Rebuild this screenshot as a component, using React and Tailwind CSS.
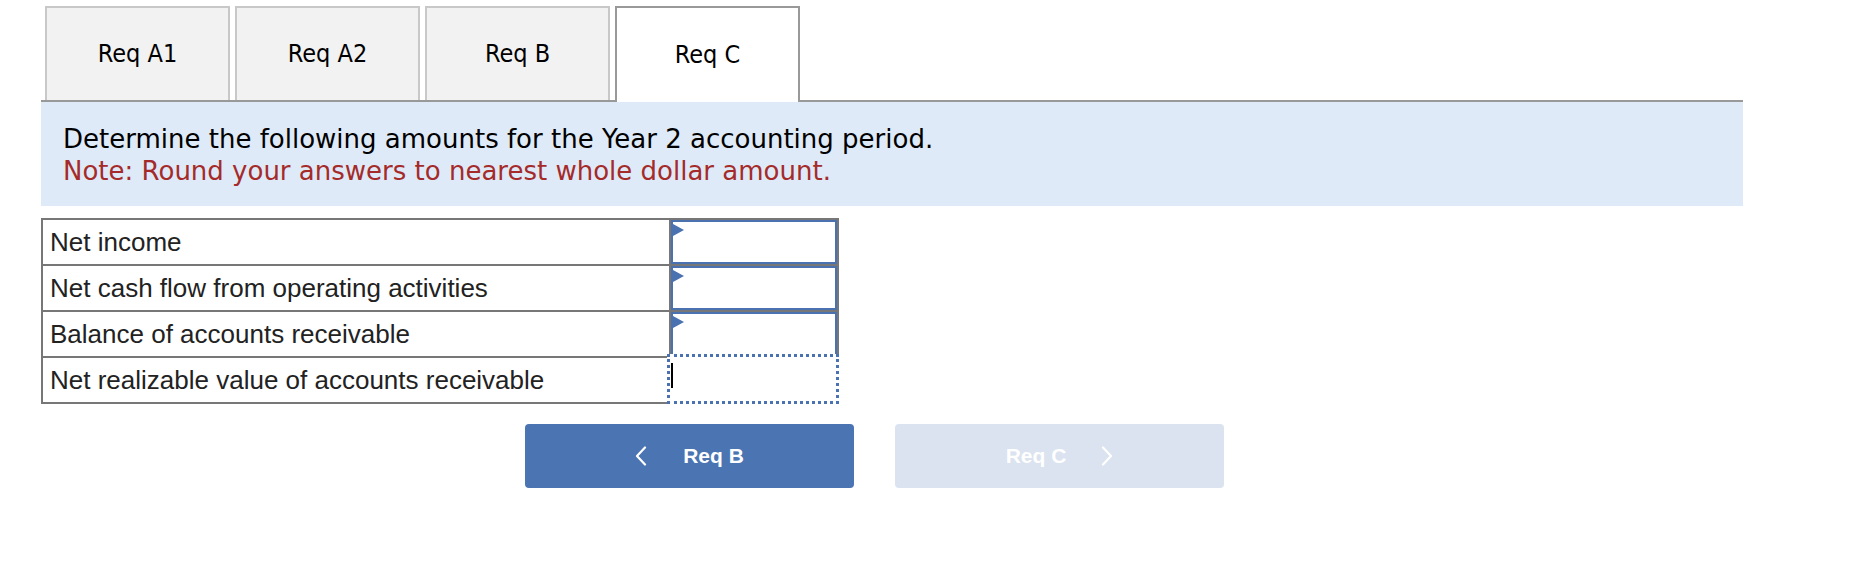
const tabs = ['Req A1', 'Req A2', 'Req B', 'Req C'];
const rows = [
  'Net income',
  'Net cash flow from operating activities',
  'Balance of accounts receivable',
  'Net realizable value of accounts receivable',
];

const tahoma = { fontFamily: '"DejaVu Sans Condensed", "DejaVu Sans", sans-serif' };
const verdana = { fontFamily: '"DejaVu Sans", Verdana, sans-serif' };
const arial = { fontFamily: '"Liberation Sans", Arial, sans-serif' };

function Marker() {
  return (
    <svg className="absolute left-0 top-[2px]" width="11" height="12" viewBox="0 0 11 12">
      <polygon points="0,0 11,6 0,12" fill="#4a72b0" />
    </svg>
  );
}

function Chevron({ dir }) {
  return (
    <svg width="12" height="20" viewBox="0 0 12 20" fill="none" stroke="currentColor" strokeWidth="2.2" strokeLinecap="round" strokeLinejoin="round">
      {dir === 'left' ? <polyline points="10,1.5 2,10 10,18.5" /> : <polyline points="2,1.5 10,10 2,18.5" />}
    </svg>
  );
}

function App() {
  return (
    <div className="min-h-[562px] w-[1854px] bg-white pl-[41px] pt-[6px]">
      <div className="w-[1702px]">
        {/* Tabs */}
        <div className="flex gap-[5px] border-b-2 border-[#999] pl-[4px]" style={tahoma}>
          {tabs.map((t, i) => {
            const active = i === tabs.length - 1;
            return (
              <div
                key={t}
                className={
                  active
                    ? 'relative -mb-[2px] flex h-[96px] w-[185px] items-center justify-center border-2 border-b-0 border-[#999] bg-white pb-[1px] text-[25px] text-black'
                    : 'flex h-[94px] w-[185px] items-center justify-center border-2 border-b-0 border-[#c8c8c8] bg-[#f2f2f2] text-[25px] text-black'
                }
              >
                {t}
              </div>
            );
          })}
        </div>

        {/* Instructions */}
        <div className="bg-[#deeaf7] pb-[19px] pl-[22px] pt-[22px] text-[26px] leading-[31.5px]" style={verdana}>
          <p className="text-black">Determine the following amounts for the Year 2 accounting period.</p>
          <p className="text-[#a52a2a]">Note: Round your answers to nearest whole dollar amount.</p>
        </div>

        {/* Answer table */}
        <div
          className="mt-[12px] grid w-[798px] grid-cols-[628px_168px] border-l-2 border-t-2 border-[#777] text-[26px] text-[#222]"
          style={arial}
        >
          {rows.map((r, i) => (
            <div key={r} className="contents">
              <div className="flex h-[46px] items-center border-b-2 border-r-2 border-[#777] pl-[7px]">{r}</div>
              <div className="relative h-[46px] border-b-2 border-r-2 border-[#777]">
                {i < 3 ? (
                  <div className="relative h-full w-full border-2 border-[#4a72b0] bg-white">
                    <Marker />
                  </div>
                ) : (
                  <>
                    <div className="absolute -bottom-[2px] -left-[4px] -right-[2px] -top-[4px] border-[3px] border-dotted border-[#4a72b0] bg-white" />
                    <span className="absolute left-0 top-[5px] h-[25px] w-[2px] bg-black" />
                  </>
                )}
              </div>
            </div>
          ))}
        </div>

        {/* Navigation */}
        <div className="ml-[484px] mt-[20px] flex gap-[41px] text-[21px] font-bold text-white" style={arial}>
          <button className="flex h-[64px] w-[329px] items-center justify-center gap-[36px] rounded-[4px] bg-[#4a74b2]">
            <Chevron dir="left" />
            <span>Req B</span>
          </button>
          <button className="flex h-[64px] w-[329px] items-center justify-center gap-[35px] rounded-[4px] bg-[#dae3ef]">
            <span>Req C</span>
            <Chevron dir="right" />
          </button>
        </div>
      </div>
    </div>
  );
}

export default App;
